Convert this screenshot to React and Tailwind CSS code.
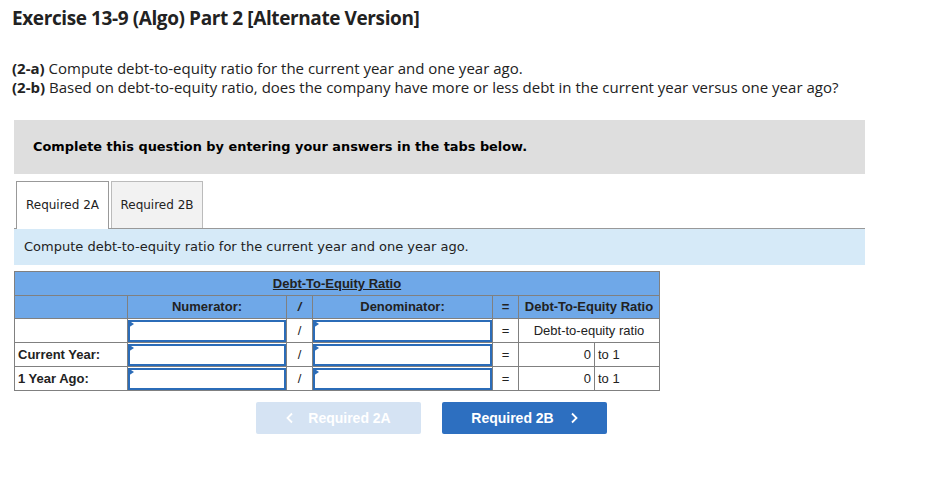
import React from "react";

function Inp() {
  return (
    <div className="relative h-[22px] border-2 border-[#2b6cb8] bg-white">
      <div className="absolute left-[-2px] top-[-2px] w-0 h-0 border-t-[4px] border-b-[4px] border-l-[6px] border-t-transparent border-b-transparent border-l-[#2b6cb8]" />
    </div>
  );
}

export default function App() {
  const cell = "border border-[#808080] px-[3px]";
  return (
    <div className="w-[932px] h-[478px] bg-white relative" style={{ fontFamily: "'Open Sans', sans-serif" }}>
      <div className="pl-[12px] pt-[6px]">
        <h1 className="text-[19px] font-bold text-[#222] leading-[24px] tracking-[-0.4px]" style={{ fontFamily: "'Open Sans', sans-serif" }}>
          Exercise 13-9 (Algo) Part 2 [Alternate Version]
        </h1>
        <div className="mt-[29px] text-[15px] leading-[19px] text-[#222]" style={{ fontFamily: "'Open Sans', sans-serif" }}>
          <p><b>(2-a)</b> Compute debt-to-equity ratio for the current year and one year ago.</p>
          <p><b>(2-b)</b> Based on debt-to-equity ratio, does the company have more or less debt in the current year versus one year ago?</p>
        </div>
      </div>
      <div className="mx-[14px] w-[851px]" style={{ fontFamily: "Verdana, 'DejaVu Sans', sans-serif" }}>
        <div className="mt-[23px] h-[54px] bg-[#dedede] flex items-center pl-[19px] text-[12.9px] font-bold text-black">
          Complete this question by entering your answers in the tabs below.
        </div>
        <div className="mt-[7px] flex items-end gap-[2px] pl-[2px] border-b border-[#999] h-[48px]">
          <div className="w-[93px] h-[48px] border border-b-0 border-[#999] bg-white flex items-center justify-center text-[12px] text-[#222] mb-[-1px] pb-[1px]">Required 2A</div>
          <div className="w-[92px] h-[47px] border border-b-0 border-[#bbb] bg-[#f2f2f2] flex items-center justify-center text-[12px] text-[#222]">Required 2B</div>
        </div>
        <div className="h-[36px] bg-[#d6eaf8] flex items-center pl-[10px] text-[13px] text-[#222]">
          Compute debt-to-equity ratio for the current year and one year ago.
        </div>
      </div>
      <div className="ml-[14px] mt-[6px]" style={{ fontFamily: "Arial, 'Liberation Sans', sans-serif" }}>
        <table className="border-collapse text-[13px] text-[#222] w-[645px]" style={{ tableLayout: "fixed" }}>
          <colgroup>
            <col style={{ width: 113 }} />
            <col style={{ width: 159 }} />
            <col style={{ width: 26 }} />
            <col style={{ width: 180 }} />
            <col style={{ width: 26 }} />
            <col style={{ width: 76 }} />
            <col style={{ width: 65 }} />
          </colgroup>
          <tbody>
            <tr className="h-[24px] bg-[#6fa8e8]">
              <td colSpan={7} className={cell + " text-center font-bold underline"}>Debt-To-Equity Ratio</td>
            </tr>
            <tr className="h-[23px] bg-[#6fa8e8] font-bold">
              <td className={cell}></td>
              <td className={cell + " text-center"}>Numerator:</td>
              <td className={cell + " text-center"}><i>/</i></td>
              <td className={cell + " text-center"}>Denominator:</td>
              <td className={cell + " text-center"}>=</td>
              <td colSpan={2} className={cell + " text-center"}>Debt-To-Equity Ratio</td>
            </tr>
            {[["", true], ["Current Year:", false], ["1 Year Ago:", false]].map(([label, first], i) => (
              <tr key={i} className="h-[24px] bg-white">
                <td className={cell + " font-bold"}>{label}</td>
                <td className="border border-[#808080] p-0"><Inp /></td>
                <td className={cell + " text-center"}>/</td>
                <td className="border border-[#808080] p-0"><Inp /></td>
                <td className={cell + " text-center"}>=</td>
                {first ? (
                  <td colSpan={2} className={cell + " text-center"}>Debt-to-equity ratio</td>
                ) : (
                  <>
                    <td className={cell + " text-right"}>0</td>
                    <td className={cell}>to 1</td>
                  </>
                )}
              </tr>
            ))}
          </tbody>
        </table>
      </div>
      <div className="flex gap-[21px] ml-[256px] mt-[11px]" style={{ fontFamily: "Arial, 'Liberation Sans', sans-serif" }}>
        <div className="w-[165px] h-[32px] rounded-[2px] bg-[#d5e3f3] text-white font-bold text-[14px] flex items-center justify-center gap-[14px]">
          <svg width="8" height="12" viewBox="0 0 8 12"><path d="M6 1.5 L1.5 6 L6 10.5" stroke="white" strokeWidth="1.8" fill="none" /></svg>
          <span>Required 2A</span>
        </div>
        <div className="w-[165px] h-[32px] rounded-[2px] bg-[#2d6fc0] text-white font-bold text-[14px] flex items-center justify-center gap-[16px]">
          <span>Required 2B</span>
          <svg width="8" height="12" viewBox="0 0 8 12"><path d="M2 1.5 L6.5 6 L2 10.5" stroke="white" strokeWidth="1.8" fill="none" /></svg>
        </div>
      </div>
    </div>
  );
}
